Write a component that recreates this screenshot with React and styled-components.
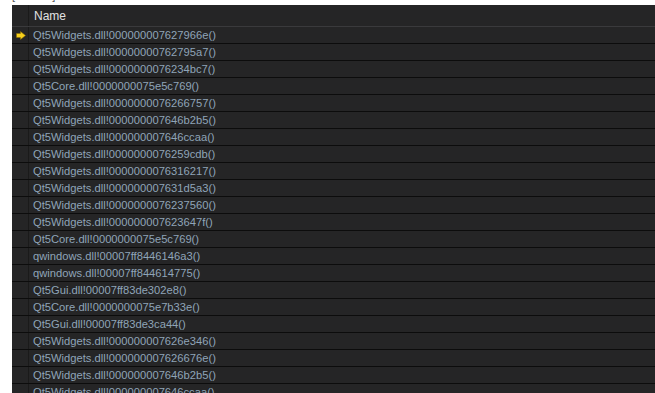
import React from 'react'
import styled, {createGlobalStyle} from 'styled-components'

const GlobalStyle = createGlobalStyle`
  html, body {
    margin: 0;
    padding: 0;
    background: #ffffff;
    overflow: hidden;
  }
`

const frames = [
  'Qt5Widgets.dll!000000007627966e()',
  'Qt5Widgets.dll!00000000762795a7()',
  'Qt5Widgets.dll!0000000076234bc7()',
  'Qt5Core.dll!0000000075e5c769()',
  'Qt5Widgets.dll!0000000076266757()',
  'Qt5Widgets.dll!000000007646b2b5()',
  'Qt5Widgets.dll!000000007646ccaa()',
  'Qt5Widgets.dll!0000000076259cdb()',
  'Qt5Widgets.dll!0000000076316217()',
  'Qt5Widgets.dll!000000007631d5a3()',
  'Qt5Widgets.dll!0000000076237560()',
  'Qt5Widgets.dll!000000007623647f()',
  'Qt5Core.dll!0000000075e5c769()',
  'qwindows.dll!00007ff8446146a3()',
  'qwindows.dll!00007ff844614775()',
  'Qt5Gui.dll!00007ff83de302e8()',
  'Qt5Core.dll!0000000075e7b33e()',
  'Qt5Gui.dll!00007ff83de3ca44()',
  'Qt5Widgets.dll!000000007626e346()',
  'Qt5Widgets.dll!000000007626676e()',
  'Qt5Widgets.dll!000000007646b2b5()',
  'Qt5Widgets.dll!000000007646ccaa()',
]

// yellow "current frame" marker
const CurrentArrow = () => (
  <svg width="10" height="9" viewBox="0 0 10 9">
    <path
      d="M0.5 2.5 H4.5 V0.5 L9.5 4.5 L4.5 8.5 V6.5 H0.5 Z"
      fill="#f7d01c"
      stroke="#8a6d00"
      strokeWidth="0.5"
    />
  </svg>
)

const CallStack = () => (
  <>
    <GlobalStyle/>
    <Caption><span>[Frames]</span></Caption>
    <Panel>
      <Header>
        <Gutter/>
        <HeaderCell>Name</HeaderCell>
      </Header>
      {frames.map((name, i) => (
        <Row key={i}>
          <Gutter>{i === 0 && <CurrentArrow/>}</Gutter>
          <Cell>{name}</Cell>
        </Row>
      ))}
    </Panel>
  </>
)

const Caption = styled.div`
  height: 5px;
  overflow: hidden;
  padding-left: 12px;
  font-family: "Liberation Sans", Arial, sans-serif;
  font-size: 11px;
  color: #555;
  & > span {
    display: block;
    line-height: 13px;
    margin-top: -10px;
  }
`

const Panel = styled.div`
  margin-left: 12px;
  background-color: #252526;
  font-family: "Liberation Sans", Arial, sans-serif;
  font-size: 11px;
`

const Header = styled.div`
  display: grid;
  grid-template-columns: 17px 1fr;
  height: 21px;
  border-bottom: 1px solid #3a3a3c;
`

const Row = styled.div`
  display: grid;
  grid-template-columns: 17px 1fr;
  height: 16px;
  border-bottom: 1px solid #0c0c0c;
`

const Gutter = styled.div`
  display: flex;
  align-items: center;
  justify-content: center;
  padding-left: 1px;
  border-right: 1px solid #1a1a1a;
`

const HeaderCell = styled.div`
  display: flex;
  align-items: center;
  padding-left: 5px;
  color: #e2e2e2;
  font-size: 12px;
`

const Cell = styled.div`
  display: flex;
  align-items: center;
  padding-left: 4px;
  color: #8fa4b8;
  font-size: 11.2px;
  white-space: nowrap;
`

export default CallStack
